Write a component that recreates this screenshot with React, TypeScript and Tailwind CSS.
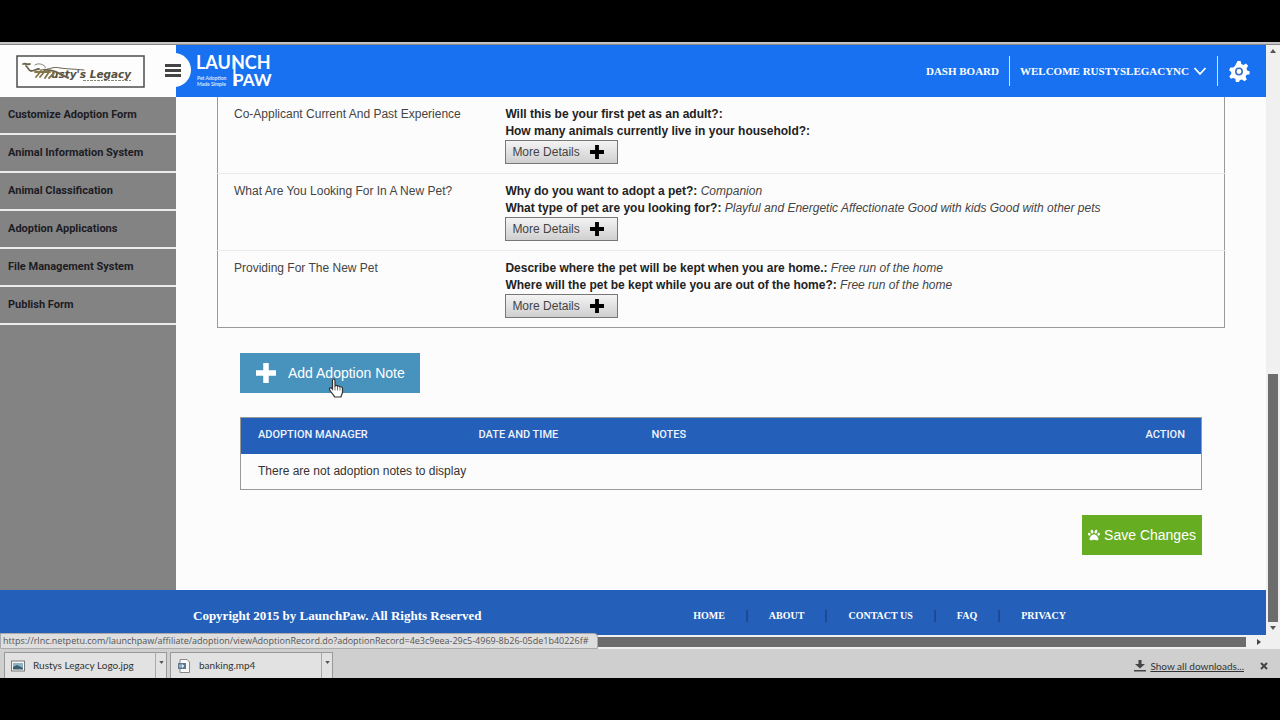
import React from "react";
import { FaPaw } from "react-icons/fa";

const menuItems = [
  "Customize Adoption Form",
  "Animal Information System",
  "Animal Classification",
  "Adoption Applications",
  "File Management System",
  "Publish Form",
];

const sections = [
  {
    title: "Co-Applicant Current And Past Experience",
    answers: [
      { question: "Will this be your first pet as an adult?:", answer: "" },
      { question: "How many animals currently live in your household?:", answer: "" },
    ],
  },
  {
    title: "What Are You Looking For In A New Pet?",
    answers: [
      { question: "Why do you want to adopt a pet?:", answer: "Companion" },
      {
        question: "What type of pet are you looking for?:",
        answer: "Playful and Energetic Affectionate Good with kids Good with other pets",
      },
    ],
  },
  {
    title: "Providing For The New Pet",
    answers: [
      { question: "Describe where the pet will be kept when you are home.:", answer: "Free run of the home" },
      { question: "Where will the pet be kept while you are out of the home?:", answer: "Free run of the home" },
    ],
  },
];

const footerLinks = ["HOME", "ABOUT", "CONTACT US", "FAQ", "PRIVACY"];

function RescueLogo() {
  return (
    <svg viewBox="0 0 129 33" className="h-[33px] w-[129px]" role="img" aria-label="Rusty's Legacy">
      <rect x="1" y="1" width="127" height="31" fill="#fdfdfd" stroke="#4d4d4d" strokeWidth="1.5" />
      <text x="35" y="23" fontSize="10.500" className="fill-[#55503f] font-['DejaVu_Sans'] font-bold italic">usty's Legacy</text>
      <g fill="none" stroke="#6b624c" strokeLinecap="round" strokeLinejoin="round">
        <path d="M7 9c3-1 5 1 7 0M10 11c2 1 2 4 5 5 3 0 5-2 8-2" strokeWidth="1.8" />
        <path d="M19 10c3-2 6-1 8 0s3 2 2 3" strokeWidth=".8" />
        <path d="M24 15c9 0 13-4 20-2 8 1 14 1 24 2" strokeWidth="1" />
        <path d="M28 15c8-1 15 3 24 8" strokeWidth="1.800" />
      </g>
      <g fill="none" stroke="#857549" strokeWidth="1.800" strokeLinecap="round">
        <path d="M20 22l5-6M24 22l5-6M29 23l4-6M33 23l5-5M19 17h15" />
      </g>
      <path d="M67 25.500h48" stroke="#8a8674" strokeWidth="1" strokeDasharray="3 1 2 1" />
    </svg>
  );
}

function BrandLogo() {
  return (
    <svg viewBox="0 0 80 52" className="h-[52px] w-20" role="img" aria-label="Launch Paw">
      <text className="fill-white font-['Lato'] font-bold">
        <tspan x="0" y="24" fontSize="18">LAUNCH</tspan>
        <tspan x="37" y="41" fontSize="17">PAW</tspan>
      </text>
      <text fontSize="5" className="fill-white/80 font-['Lato'] font-bold">
        <tspan x="1" y="35">Pet Adoption</tspan>
        <tspan x="1" y="41">Made Simple</tspan>
      </text>
      <path d="M38.500 12v29" stroke="white" strokeWidth="2" />
    </svg>
  );
}

function Header() {
  return (
    <header className="flex h-[52px] bg-[#1771f0]">
      <div className="relative flex w-44 shrink-0 items-center bg-[#fdfdfd] pl-4">
        <RescueLogo />
        <div className="absolute right-[-15px] top-2 h-[34px] w-[34px] rounded-full bg-[#fdfdfd]" />
        <button aria-label="Toggle menu" className="absolute right-[-5px] top-[19px] flex w-4 flex-col gap-[2px]">
          <span className="h-[3px] w-full bg-[#444]" />
          <span className="h-[3px] w-full bg-[#444]" />
          <span className="h-[3px] w-full bg-[#444]" />
        </button>
      </div>
      <div className="flex flex-1 items-center pl-5">
        <BrandLogo />
        <nav className="ml-auto flex items-center pr-4 font-['Liberation_Serif',serif] text-[11px] font-bold text-white">
          <a href="#" className="pr-[10px]">DASH BOARD</a>
          <button className="flex h-[30px] items-center gap-1 border-x border-white/80 pl-[10px] pr-[10px]">
            WELCOME RUSTYSLEGACYNC
            <svg viewBox="0 0 14 10" className="h-[10px] w-[14px]" fill="none" stroke="white" strokeWidth="1.8">
              <path d="M1.500 2l5.500 6 5.500-6" />
            </svg>
          </button>
          <button aria-label="Settings" className="ml-[10px]">
            <svg viewBox="0 0 22 22" className="h-[22px] w-[22px]">
              <path
                d="M9.600 1h3l.7 3 2 .9 2.700-1.400 2.100 2.300-1.600 2.600.7 2 2.400.9v2.900l-3 .6-1 2 1.200 2.600-2.400 1.800-2.400-1.700-2 .6-1.300 2.400-2.900-.5-.4-2.900-1.900-1.200-2.700.8-1.500-2.500 2-2.100-.1-2.200-2.100-1.700 1.200-2.700 2.900.1 1.700-1.500z"
                fill="white"
              />
              <circle cx="11" cy="11.500" r="3.200" fill="none" stroke="#3a6fc4" strokeWidth="1.600" />
            </svg>
          </button>
        </nav>
      </div>
    </header>
  );
}

function Sidebar() {
  return (
    <aside className="w-44 shrink-0 bg-[#838383]">
      <ul>
        {menuItems.map((item) => (
          <li key={item} className="h-[38px] border-b-2 border-[#ececec]">
            <a href="#" className="flex h-full items-center pl-2 font-['Roboto',sans-serif] text-[11px] font-bold text-[#1c1c24]">
              {item}
            </a>
          </li>
        ))}
      </ul>
    </aside>
  );
}

function Plus({ className }: { className: string }) {
  return (
    <svg viewBox="0 0 20 20" className={className} stroke="currentColor" strokeWidth="5.500" aria-hidden="true">
      <path d="M10 0v20M0 10h20" />
    </svg>
  );
}

function ApplicationTable() {
  return (
    <table className="w-full border-x border-b border-[#999] text-xs leading-[17px] text-[#444]">
      <tbody>
        {sections.map((section) => (
          <tr key={section.title} className="border-b border-[#ebebeb] align-top last:border-b-0">
            <th scope="row" className="w-[27%] pl-4 pt-[9px] text-left font-normal">{section.title}</th>
            <td className="pb-[9px] pl-4 pt-[9px]">
              {section.answers.map(({ question, answer }) => (
                <p key={question}>
                  <b className="text-[#222]">{question}</b> <i>{answer}</i>
                </p>
              ))}
              <button className="flex h-6 w-[113px] items-center gap-[10px] border border-[#777] bg-linear-to-b from-[#f4f4f4] to-[#cfcfcf] pl-[6px] text-[#444]">
                More Details
                <Plus className="h-[14px] w-[14px] text-black" />
              </button>
            </td>
          </tr>
        ))}
      </tbody>
    </table>
  );
}

function NotesTable() {
  return (
    <table className="mt-6 w-full border border-[#999] text-xs">
      <thead>
        <tr className="h-9 bg-[#245fb9] text-left font-['Roboto',sans-serif] text-[11px] text-[#eef3fb]">
          <th className="w-[23%] pl-[17px] font-medium">ADOPTION MANAGER</th>
          <th className="w-[18%] pl-[17px] font-medium">DATE AND TIME</th>
          <th className="pl-[17px] font-medium">NOTES</th>
          <th className="pr-4 text-right font-medium">ACTION</th>
        </tr>
      </thead>
      <tbody>
        <tr className="h-9">
          <td colSpan={4} className="pl-[17px] text-[#333]">There are not adoption notes to display</td>
        </tr>
      </tbody>
    </table>
  );
}

function HandCursor() {
  return (
    <svg viewBox="0 0 16 20" className="absolute left-[88px] top-[25px] h-5 w-4" aria-hidden="true">
      <path
        d="M4.500 10V2.500c0-2 2.500-2 2.500 0V8c1-1 2.300-.6 2.500.4 1-.8 2.200-.4 2.400.6 1.300-.6 2.600 0 2.600 1.500v3.500c0 2-1.500 3-1.500 5H6.500c0-2-4-4.500-5-7.500-.5-1.800 1.300-2.500 3-.5z"
        fill="white"
        stroke="#333"
        strokeWidth="1.200"
      />
      <path d="M7 8.500v4M9.500 9v3.500M12 9.500V12.500" stroke="#555" strokeWidth=".8" />
    </svg>
  );
}

function Footer() {
  return (
    <footer className="flex h-[45px] items-center bg-[#245fb9] pl-[193px] pr-[200px] pt-[6px] font-['Liberation_Serif',serif] font-bold text-white">
      <p className="text-[13px]">Copyright 2015 by LaunchPaw. All Rights Reserved</p>
      <nav className="ml-auto flex items-center text-[10px]">
        {footerLinks.map((link, i) => (
          <React.Fragment key={link}>
            {i > 0 && <span className="mx-[21px] h-3 w-[2px] bg-[#1d4a92]" />}
            <a href="#">{link}</a>
          </React.Fragment>
        ))}
      </nav>
    </footer>
  );
}

function VerticalScrollbar() {
  return (
    <div className="flex w-[14px] shrink-0 flex-col items-center bg-[#f0f0f0] pb-[5px] pt-1">
      <svg viewBox="0 0 6 4" className="h-1 w-[6px]"><path d="M0 4l3-4 3 4z" fill="#555" /></svg>
      <div className="flex-[321]" />
      <div className="w-[10px] flex-[248] bg-[#6c6c6c]" />
      <svg viewBox="0 0 6 4" className="mt-1 h-1 w-[6px]"><path d="M0 0l3 4 3-4z" fill="#555" /></svg>
    </div>
  );
}

function HorizontalScrollbar() {
  return (
    <div className="relative flex h-[14px] items-center bg-[#f0f0f0] pr-[19px]">
      <div className="h-[10px] flex-1 bg-[#6c6c6c]" />
      <svg viewBox="0 0 4 6" className="ml-[11px] h-[6px] w-1"><path d="M0 0l4 3-4 3z" fill="#444" /></svg>
      <p className="absolute bottom-0 left-0 whitespace-nowrap rounded-tr border border-[#aaa] bg-[#dedede] px-[2px] pr-2 font-['Open_Sans',sans-serif] text-[9px] leading-[14px] text-[#555]">
        https://rlnc.netpetu.com/launchpaw/affiliate/adoption/viewAdoptionRecord.do?adoptionRecord=4e3c9eea-29c5-4969-8b26-05de1b40226f#
      </p>
    </div>
  );
}

function DownloadItem({ name, video }: { name: string; video?: boolean }) {
  return (
    <div className="flex h-[26px] w-[163px] border border-b-0 border-[#999] bg-[#e2e2e2]">
      <button className="flex flex-1 items-center gap-2 pl-[6px]">
        <svg viewBox="0 0 14 14" className="h-[14px] w-[14px]">
          {video ? (
            <>
              <path d="M3 .5h7l2.500 2.500v10.500H3z" fill="#fafafa" stroke="#888" />
              <path d="M1 4h8v6H1z" fill="#5d7891" />
              <path d="M3 5.500v3M5 5.500l2 1.500-2 1.500z" stroke="#dce8ef" fill="#dce8ef" />
            </>
          ) : (
            <>
              <rect x=".5" y="2" width="13" height="10" fill="#f7f7f7" stroke="#777" />
              <path d="M2 4h10v6H2z" fill="#8fb1c4" />
              <path d="M2 8l4-2 6 3v1.500H2z" fill="#3b6170" />
            </>
          )}
        </svg>
        {name}
      </button>
      <button aria-label={`Options for ${name}`} className="flex w-[11px] justify-center border-l border-[#aaa] pt-2">
        <svg viewBox="0 0 6 4" className="h-[3px] w-[5px]"><path d="M0 0l3 4 3-4z" fill="#555" /></svg>
      </button>
    </div>
  );
}

function DownloadBar() {
  return (
    <div className="flex h-[29px] items-end gap-[3px] bg-[#cfcfcf] pl-1 pr-3 font-['Lato',sans-serif] text-[10px] text-[#333]">
      <DownloadItem name="Rustys Legacy Logo.jpg" />
      <DownloadItem name="banking.mp4" video />
      <div className="ml-auto flex h-6 items-center">
        <svg viewBox="0 0 12 12" className="mr-1 h-3 w-3" fill="#444">
          <path d="M4.500 0h3v4H11L6 8.500 1 4h3.500zM0 10h12v1.500H0z" />
        </svg>
        <a href="#" className="underline">Show all downloads...</a>
        <button aria-label="Close downloads" className="ml-4">
          <svg viewBox="0 0 8 8" className="h-2 w-2" stroke="#444" strokeWidth="2"><path d="M1 1l6 6M7 1L1 7" /></svg>
        </button>
      </div>
    </div>
  );
}

export default function App() {
  return (
    <div className="flex min-h-screen flex-col bg-black py-[42px] font-['Liberation_Sans',Arial,sans-serif]">
      <div className="h-[3px] border-b border-[#888] bg-[#c4c4c4]" />
      <div className="flex flex-1">
        <div className="flex min-w-0 flex-1 flex-col">
          <Header />
          <div className="flex flex-1">
            <Sidebar />
            <main className="flex-1 bg-[#fcfcfc] px-[41px]">
              <ApplicationTable />
              <div className="px-[23px] pb-[34px] pt-[25px]">
                <button className="relative flex h-10 w-[180px] items-center gap-3 bg-[#4793bd] pl-4 text-sm text-white">
                  <Plus className="h-5 w-5" />
                  Add Adoption Note
                  <HandCursor />
                </button>
                <NotesTable />
                <button className="ml-auto mt-[25px] flex h-10 w-[120px] items-center justify-center gap-1 bg-[#66ad22] text-sm text-white">
                  <FaPaw className="text-xs" />
                  Save Changes
                </button>
              </div>
            </main>
          </div>
          <Footer />
        </div>
        <VerticalScrollbar />
      </div>
      <HorizontalScrollbar />
      <DownloadBar />
    </div>
  );
}
